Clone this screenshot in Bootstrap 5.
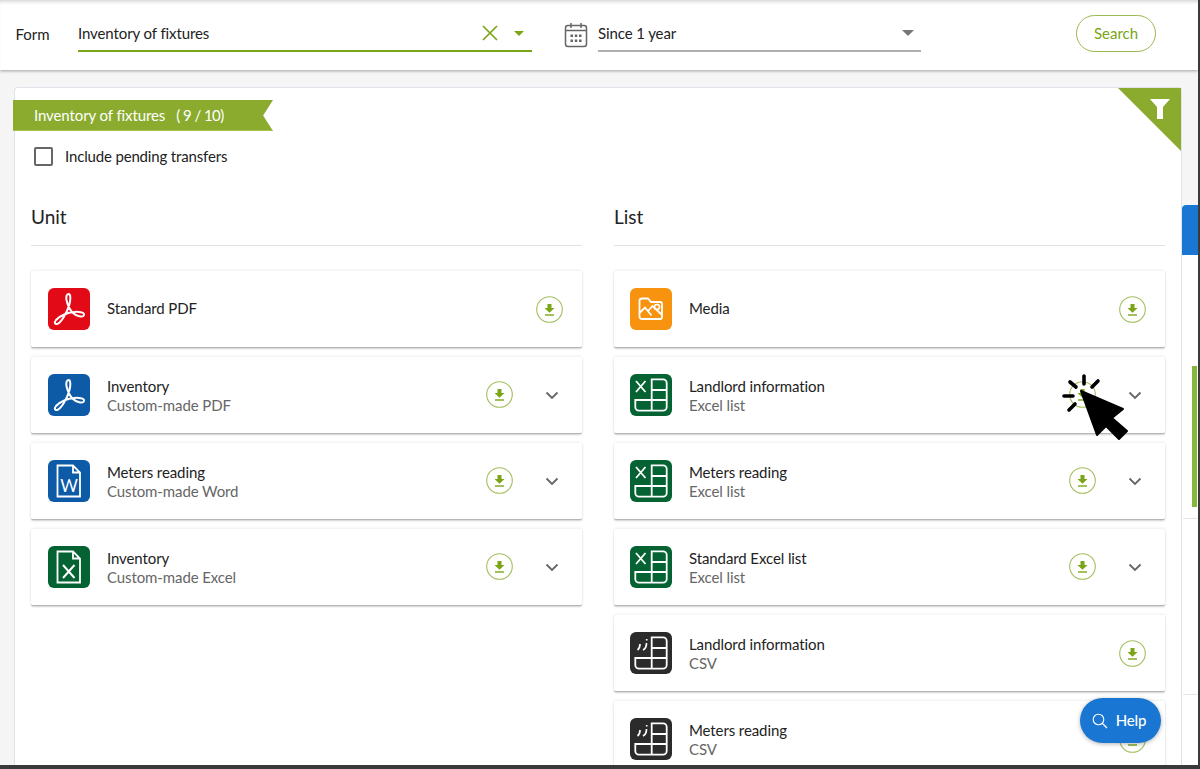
<!DOCTYPE html>
<html lang="en">
<head>
<meta charset="utf-8">
<title>Inventory of fixtures</title>
<link rel="stylesheet" href="https://cdn.jsdelivr.net/npm/bootstrap@5.3.0/dist/css/bootstrap.min.css">
<style>
html,body{height:100%;overflow:hidden}
body{background:#3a3a3a;font-family:Lato,"Liberation Sans",sans-serif;font-size:15px;color:#222;letter-spacing:-.1px}
.app-frame{height:765px;width:1198px;background:#f5f5f5;display:flex;flex-direction:column;overflow:hidden;position:relative}
.top-bar{height:70px;flex:none;background:#fff;box-shadow:inset 0 4px 4px -3px rgba(0,0,0,.22),0 1px 3px rgba(0,0,0,.35);padding-left:15.5px;padding-bottom:1px;position:relative;z-index:2}
.form-word{width:62.5px;letter-spacing:0}
.pick-a{width:454px;height:36px;margin-top:-1px;border-bottom:2px solid #7aa516;padding-right:8px}
.pick-b{width:323px;height:36px;border-bottom:2px solid #b0b0b0;padding-right:7px;margin-top:-1px}
.caret-g,.caret-d{width:0;height:0;border-left:5px solid transparent;border-right:5px solid transparent;border-top:5px solid #7aa516;margin-left:16px}
.caret-d{border-left-width:6px;border-right-width:6px;border-top-width:6px;border-top-color:#777}
.cal-ico{margin:0 10px 0 32px;flex:none}
.search-pill{width:80px;height:37px;margin:-2px 0 0 155px;border:1.5px solid #9ab84e;border-radius:19px;color:#7aa516;background:#fff;font-size:15px;padding:0;line-height:1}
.body-row{flex:1;min-height:0;padding:17px 0 0 14px}
.sheet{width:1168px;background:#fff;border:1px solid #dde3e8;border-bottom:0;border-radius:4px 4px 0 0;position:relative;padding:12px 16px 0 16px;flex:none}
.ribbon{width:260px;height:31px;background:#8aab2e;border-bottom:1px solid #a4c24a;color:#fff;padding-left:21px;clip-path:polygon(0 0,100% 0,96.2% 50%,100% 100%,0 100%)}
.ribbon .gap-cnt{margin-left:11px;letter-spacing:-.55px}
.ribbon-holder{position:absolute;left:-2px;top:12px;z-index:1}
.pend-row{margin:44px 0 0 3px;height:24px;letter-spacing:-.16px}
.pend-box{width:19px;height:19px;border:2px solid #666;border-radius:2px;margin-right:12px;background:#fff;flex:none}
.corner-flag{position:absolute;top:0;right:0;width:63px;height:63px;background:#8aab2e;clip-path:polygon(0 0,100% 0,100% 100%)}
.corner-flag svg{position:absolute;left:32px;top:11px}
.col-grid{--bs-gutter-x:32px;margin-top:35px}
.sec-title{font-size:19px;font-weight:400;line-height:28px;margin:0;padding-bottom:14px;border-bottom:1px solid #dfe3e6;margin-bottom:25px;letter-spacing:0}
.tile{height:77px;border:0;border-radius:2px;border-bottom:1px solid #b5b5b5;box-shadow:0 -1px 3px rgba(0,0,0,.06),0 1px 2px rgba(0,0,0,.18);margin-bottom:9px;padding:0 17px;background:#fff}
.col-6+.col-6 .tile{padding-left:16px}
.tile-ico{flex:none;margin-right:17px;display:block}
.tile-name{line-height:19px;color:#222}
.tile-solo{margin-top:-2px}
.tile-lines{margin-top:2px}
.tile-sub{line-height:19px;color:#666}
.dl-ico{flex:none;margin-right:2px}
.dl-ico.with-more{margin-right:32.5px;margin-top:-2px}
.more-ico{flex:none;margin-right:6px}
.side-rail{flex:1;position:relative;background:#fff;margin-top:-17px}
.rail-top{height:135px;background:#f5f5f5}
.rail-blue{height:50px;background:#1976d2;border-radius:4px 0 0 0}
.rail-green{position:absolute;top:296px;right:1px;width:5px;height:141px;background:#86b83e}
.rail-lineb{position:absolute;top:448px;left:1px;right:0;border-top:1px solid #e4e6e8}
.rail-linec{position:absolute;top:624px;left:1px;right:0;border-top:1px solid #e4e6e8}
.help-pill{position:absolute;left:1080px;top:698px;width:81px;height:45px;border-radius:23px;background:#1976d2;color:#fff;border:0;box-shadow:0 1px 4px rgba(0,0,0,.3);font-size:15px;font-weight:500;padding:0 3px 0 0;letter-spacing:-.2px;z-index:5}
.cursor-art{position:absolute;left:1060px;top:372px;z-index:6;pointer-events:none}
</style>
</head>
<body>
<svg width="0" height="0" class="d-block position-absolute" aria-hidden="true">
  <symbol id="i-dl" viewBox="0 0 27 27"><circle cx="13.5" cy="13.5" r="12.8" fill="#fff" stroke="#a3bf5f" stroke-width="1.100"/><path d="M11.500 8h4v4h3l-5 4.800-5-4.800h3z" fill="#7aa516"/><path d="M9 19h9" stroke="#7aa516" stroke-width="1.400"/></symbol>
  <symbol id="i-more" viewBox="0 0 14 9"><path d="M1.5 1.5 7 7l5.5-5.500" fill="none" stroke="#666" stroke-width="1.800"/></symbol>
  <symbol id="i-acro" viewBox="0 0 42 42"><path d="M20.500 6C18.500 6 18 9 18.500 12 19.500 17 22 22 25 25c3 3 10 5 11 2 1-3-6-3.500-10-3-6 .5-14 3.500-18 8-2 2.500-1 4.500 1 4 4-1 10-11 12.500-20C22.500 12 23 6 20.500 6Z" fill="none" stroke="#fff" stroke-width="2"/></symbol>
  <symbol id="i-sheet" viewBox="0 0 42 42"><path d="M21.700 36.700V5.300H33a3.700 3.700 0 0 1 3.700 3.700V33a3.700 3.700 0 0 1-3.700 3.700H9A3.700 3.700 0 0 1 5.300 33V26H36.700M21.700 16H36.700" fill="none" stroke="#fff" stroke-width="1.800"/></symbol>
  <symbol id="i-page" viewBox="0 0 42 42"><path d="M9.500 5.500H25L32 12.500V36.500H9.500Z M25 5.500V12.500H32" fill="none" stroke="#fff" stroke-width="1.800"/></symbol>
</svg>
<div class="app-frame">
  <header class="top-bar d-flex align-items-center">
    <span class="form-word">Form</span>
    <div class="pick-a d-flex align-items-center">
      <span class="flex-grow-1">Inventory of fixtures</span>
      <svg width="16" height="16" viewBox="0 0 16 16" aria-hidden="true"><path d="M1 1l14 14M15 1 1 15" stroke="#7aa516" stroke-width="1.700"/></svg>
      <span class="caret-g"></span>
    </div>
    <svg class="cal-ico" width="24" height="26" viewBox="0 0 24 26" aria-hidden="true"><rect x="1.500" y="3.500" width="21" height="21" rx="2.500" fill="none" stroke="#666" stroke-width="1.500"/><path d="M1.500 8.500h21M7 1v5M17 1v5" stroke="#666" stroke-width="1.500"/><path d="M6.500 12.500h2.500v2.500H6.500zM10.800 12.500h2.500v2.500h-2.500zM15 12.500h2.500v2.500H15zM6.500 17.500h2.500V20H6.500zM10.800 17.500h2.500V20h-2.500zM15 17.500h2.500V20H15z" fill="#666"/></svg>
    <div class="pick-b d-flex align-items-center">
      <span class="flex-grow-1">Since 1 year</span>
      <span class="caret-d"></span>
    </div>
    <button type="button" class="btn search-pill">Search</button>
  </header>
  <div class="body-row d-flex">
    <main class="sheet">
      <div class="ribbon-holder"><div class="ribbon d-flex align-items-center"><span>Inventory of fixtures</span><span class="gap-cnt">( 9 / 10)</span></div></div>
      <div class="corner-flag"><svg width="20" height="20" viewBox="0 0 20 20" aria-hidden="true"><path d="M0 0h20l-7 8v12H7V8z" fill="#fff"/></svg></div>
      <div class="pend-row d-flex align-items-center"><span class="pend-box"></span><span>Include pending transfers</span></div>
      <div class="row col-grid">
        <section class="col-6">
          <h2 class="sec-title">Unit</h2>
          <div class="card tile flex-row align-items-center">
            <svg class="tile-ico" width="42" height="42" aria-hidden="true"><rect width="42" height="42" rx="6" fill="#e30a17"/><use href="#i-acro"/></svg>
            <div class="flex-grow-1 tile-name tile-solo">Standard PDF</div>
            <svg class="dl-ico" width="27" height="27"><use href="#i-dl"/></svg>
          </div>
          <div class="card tile flex-row align-items-center">
            <svg class="tile-ico" width="42" height="42" aria-hidden="true"><rect width="42" height="42" rx="6" fill="#0d5aa7"/><use href="#i-acro"/></svg>
            <div class="flex-grow-1 tile-lines"><div class="tile-name">Inventory</div><div class="tile-sub">Custom-made PDF</div></div>
            <svg class="dl-ico with-more" width="27" height="27"><use href="#i-dl"/></svg>
            <svg class="more-ico" width="14" height="9"><use href="#i-more"/></svg>
          </div>
          <div class="card tile flex-row align-items-center">
            <svg class="tile-ico" width="42" height="42" aria-hidden="true"><rect width="42" height="42" rx="6" fill="#0d5aa7"/><use href="#i-page"/><text x="21" y="32" text-anchor="middle" font-family="Lato,sans-serif" font-size="17" fill="#fff">W</text></svg>
            <div class="flex-grow-1 tile-lines"><div class="tile-name">Meters reading</div><div class="tile-sub">Custom-made Word</div></div>
            <svg class="dl-ico with-more" width="27" height="27"><use href="#i-dl"/></svg>
            <svg class="more-ico" width="14" height="9"><use href="#i-more"/></svg>
          </div>
          <div class="card tile flex-row align-items-center">
            <svg class="tile-ico" width="42" height="42" aria-hidden="true"><rect width="42" height="42" rx="6" fill="#056232"/><use href="#i-page"/><path d="M15 19l11.500 13M26.500 19 15 32" stroke="#fff" stroke-width="2"/></svg>
            <div class="flex-grow-1 tile-lines"><div class="tile-name">Inventory</div><div class="tile-sub">Custom-made Excel</div></div>
            <svg class="dl-ico with-more" width="27" height="27"><use href="#i-dl"/></svg>
            <svg class="more-ico" width="14" height="9"><use href="#i-more"/></svg>
          </div>
        </section>
        <section class="col-6">
          <h2 class="sec-title">List</h2>
          <div class="card tile flex-row align-items-center">
            <svg class="tile-ico" width="42" height="42" aria-hidden="true"><rect width="42" height="42" rx="6" fill="#f7930f"/><path d="M12 10.500h6l3 3.500h9a2 2 0 0 1 2 2v13a2 2 0 0 1-2 2H12a2.500 2.500 0 0 1-2.500-2.500V13a2.500 2.500 0 0 1 2.500-2.500ZM9.500 25l5.500-5.500 6.500 8M18 23l4.500-5 9.500 9" fill="none" stroke="#fff" stroke-width="1.800"/><circle cx="27" cy="19" r="2.500" fill="none" stroke="#fff" stroke-width="1.600"/></svg>
            <div class="flex-grow-1 tile-name tile-solo">Media</div>
            <svg class="dl-ico" width="27" height="27"><use href="#i-dl"/></svg>
          </div>
          <div class="card tile flex-row align-items-center">
            <svg class="tile-ico" width="42" height="42" aria-hidden="true"><rect width="42" height="42" rx="6" fill="#056232"/><use href="#i-sheet"/><path d="M6 7l9.500 11M15.500 7 6 18" stroke="#fff" stroke-width="1.800"/></svg>
            <div class="flex-grow-1 tile-lines"><div class="tile-name">Landlord information</div><div class="tile-sub">Excel list</div></div>
            <svg class="dl-ico with-more" width="27" height="27"><use href="#i-dl"/></svg>
            <svg class="more-ico" width="14" height="9"><use href="#i-more"/></svg>
          </div>
          <div class="card tile flex-row align-items-center">
            <svg class="tile-ico" width="42" height="42" aria-hidden="true"><rect width="42" height="42" rx="6" fill="#056232"/><use href="#i-sheet"/><path d="M6 7l9.500 11M15.500 7 6 18" stroke="#fff" stroke-width="1.800"/></svg>
            <div class="flex-grow-1 tile-lines"><div class="tile-name">Meters reading</div><div class="tile-sub">Excel list</div></div>
            <svg class="dl-ico with-more" width="27" height="27"><use href="#i-dl"/></svg>
            <svg class="more-ico" width="14" height="9"><use href="#i-more"/></svg>
          </div>
          <div class="card tile flex-row align-items-center">
            <svg class="tile-ico" width="42" height="42" aria-hidden="true"><rect width="42" height="42" rx="6" fill="#056232"/><use href="#i-sheet"/><path d="M6 7l9.500 11M15.500 7 6 18" stroke="#fff" stroke-width="1.800"/></svg>
            <div class="flex-grow-1 tile-lines"><div class="tile-name">Standard Excel list</div><div class="tile-sub">Excel list</div></div>
            <svg class="dl-ico with-more" width="27" height="27"><use href="#i-dl"/></svg>
            <svg class="more-ico" width="14" height="9"><use href="#i-more"/></svg>
          </div>
          <div class="card tile flex-row align-items-center">
            <svg class="tile-ico" width="42" height="42" aria-hidden="true"><rect width="42" height="42" rx="6" fill="#2b2b2b"/><use href="#i-sheet"/><path d="M7.500 18c1.500-1 2.500-3 2.500-6M13 18c2-1 3.500-3.500 3.500-7M16.700 7v1.500" fill="none" stroke="#fff" stroke-width="1.700"/></svg>
            <div class="flex-grow-1 tile-lines"><div class="tile-name">Landlord information</div><div class="tile-sub">CSV</div></div>
            <svg class="dl-ico" width="27" height="27"><use href="#i-dl"/></svg>
          </div>
          <div class="card tile flex-row align-items-center">
            <svg class="tile-ico" width="42" height="42" aria-hidden="true"><rect width="42" height="42" rx="6" fill="#2b2b2b"/><use href="#i-sheet"/><path d="M7.500 18c1.500-1 2.500-3 2.500-6M13 18c2-1 3.500-3.500 3.500-7M16.700 7v1.500" fill="none" stroke="#fff" stroke-width="1.700"/></svg>
            <div class="flex-grow-1 tile-lines"><div class="tile-name">Meters reading</div><div class="tile-sub">CSV</div></div>
            <svg class="dl-ico" width="27" height="27"><use href="#i-dl"/></svg>
          </div>
        </section>
      </div>
    </main>
    <aside class="side-rail">
      <div class="rail-top"></div>
      <div class="rail-blue"></div>
      <div class="rail-green"></div>
      <div class="rail-lineb"></div>
      <div class="rail-linec"></div>
    </aside>
  </div>
  <button type="button" class="btn help-pill d-flex align-items-center justify-content-center gap-2"><svg width="16" height="16" viewBox="0 0 16 16" aria-hidden="true"><circle cx="6.500" cy="6.500" r="5.300" fill="none" stroke="#fff" stroke-width="1.100"/><path d="M10.500 10.500 15 15" stroke="#fff" stroke-width="1.200"/></svg><span>Help</span></button>
  <svg class="cursor-art" width="72" height="72" viewBox="0 0 72 72" aria-hidden="true"><path d="M21 19 63 37 52 46 67 59 59 67 46 54 37 63Z" fill="#000" stroke="#000" stroke-width="2" stroke-linejoin="round"/><path d="M24 4v8M38 9l-6 6M10 10l6 5M4 24h9M9 38l6-6" stroke="#000" stroke-width="3.600" stroke-linecap="round"/></svg>
</div>
<script src="https://cdn.jsdelivr.net/npm/bootstrap@5.3.0/dist/js/bootstrap.bundle.min.js"></script>
</body>
</html>
